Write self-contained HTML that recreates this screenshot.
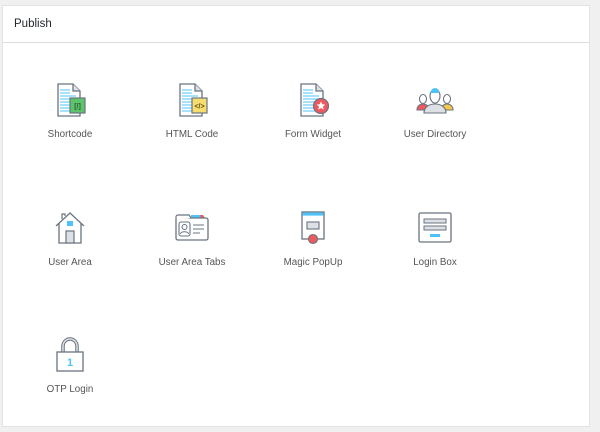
<!DOCTYPE html>
<html><head><style>
body{margin:0;width:600px;height:432px;background:#f0f0f0;font-family:"Liberation Sans",sans-serif;position:relative;overflow:hidden}
.card{position:absolute;left:2px;top:5px;width:588px;height:422px;background:#fff;border:1px solid #e2e2e2;box-sizing:border-box}
.hd{position:absolute;left:0;top:0;right:0;height:36px;border-bottom:1px solid #dcdcdc}
.hd span{position:absolute;left:11px;top:12px;font-size:11.5px;color:#23282d}
.it{position:absolute;width:120px;text-align:center}
.it svg{display:block;margin:0 auto}
.it div{font-size:9.8px;color:#555;margin-top:11px}
</style></head><body>
<div class="card"><div class="hd"><span>Publish</span></div></div>

<div class="it" style="left:10px;top:82px">
<svg width="36" height="36" viewBox="0 0 36 36"><path d="M6 2h15l7 7v25H6z" fill="#fff" stroke="#6b7480" stroke-width="1.3"/><path d="M21 2v7h7" fill="#dde1e6" stroke="#6b7480" stroke-width="1.3"/><g stroke="#4fc3f7" stroke-width="1"><line x1="8" y1="8" x2="18" y2="8"/><line x1="8" y1="11" x2="18" y2="11"/><line x1="8" y1="14" x2="24" y2="14"/><line x1="8" y1="17" x2="24" y2="17"/><line x1="8" y1="20" x2="24" y2="20"/><line x1="8" y1="23" x2="24" y2="23"/><line x1="8" y1="26" x2="24" y2="26"/><line x1="8" y1="29" x2="24" y2="29"/></g><rect x="18" y="16" width="15" height="15" fill="#5cc46a" stroke="#6b7480" stroke-width="1.2"/><text x="25.5" y="26.5" font-size="7" text-anchor="middle" fill="#2e5a33" font-weight="bold">[/]</text></svg>
<div>Shortcode</div></div>

<div class="it" style="left:132px;top:82px">
<svg width="36" height="36" viewBox="0 0 36 36"><path d="M6 2h15l7 7v25H6z" fill="#fff" stroke="#6b7480" stroke-width="1.3"/><path d="M21 2v7h7" fill="#dde1e6" stroke="#6b7480" stroke-width="1.3"/><g stroke="#4fc3f7" stroke-width="1"><line x1="8" y1="8" x2="18" y2="8"/><line x1="8" y1="11" x2="18" y2="11"/><line x1="8" y1="14" x2="24" y2="14"/><line x1="8" y1="17" x2="24" y2="17"/><line x1="8" y1="20" x2="24" y2="20"/><line x1="8" y1="23" x2="24" y2="23"/><line x1="8" y1="26" x2="24" y2="26"/><line x1="8" y1="29" x2="24" y2="29"/></g><rect x="18" y="16" width="15" height="15" fill="#f7dc6f" stroke="#6b7480" stroke-width="1.2"/><text x="25.5" y="26.5" font-size="7" text-anchor="middle" fill="#5a4a10" font-weight="bold">&lt;/&gt;</text></svg>
<div>HTML Code</div></div>

<div class="it" style="left:253px;top:82px">
<svg width="36" height="36" viewBox="0 0 36 36"><path d="M6 2h15l7 7v25H6z" fill="#fff" stroke="#6b7480" stroke-width="1.3"/><path d="M21 2v7h7" fill="#dde1e6" stroke="#6b7480" stroke-width="1.3"/><g stroke="#4fc3f7" stroke-width="1"><line x1="8" y1="8" x2="18" y2="8"/><line x1="8" y1="11" x2="18" y2="11"/><line x1="8" y1="14" x2="24" y2="14"/><line x1="8" y1="17" x2="24" y2="17"/><line x1="8" y1="20" x2="24" y2="20"/><line x1="8" y1="23" x2="24" y2="23"/><line x1="8" y1="26" x2="24" y2="26"/><line x1="8" y1="29" x2="24" y2="29"/></g><circle cx="26" cy="24" r="7.5" fill="#ec5a5f" stroke="#6b7480" stroke-width="1.2"/><path d="M26 19.5l1.3 2.8 3 .3-2.3 2 .7 3-2.7-1.6-2.7 1.6.7-3-2.3-2 3-.3z" fill="#fff"/></svg>
<div>Form Widget</div></div>

<div class="it" style="left:375px;top:82px">
<svg width="40" height="36" viewBox="0 0 40 36"><g stroke="#6b7480" stroke-width="1.1"><path d="M2 28c0-4 3-6 6-6s6 2 6 6z" fill="#ec5a5f"/><ellipse cx="8" cy="17" rx="3.5" ry="4.5" fill="#fff"/><path d="M26 28c0-4 3-6 6-6s6 2 6 6z" fill="#f7c948"/><ellipse cx="32" cy="17" rx="3.5" ry="4.5" fill="#fff"/><path d="M9 31c0-6 5-9 11-9s11 3 11 9z" fill="#dde1e6"/><ellipse cx="20" cy="14" rx="5" ry="7" fill="#fff"/></g><path d="M15.5 11a4.5 5 0 0 1 9 0z" fill="#4fc3f7"/></svg>
<div>User Directory</div></div>

<div class="it" style="left:10px;top:210px">
<svg width="36" height="36" viewBox="0 0 36 36"><path d="M4 16L18 3l14 13M7 13v20h22V13" fill="#fff" stroke="#6b7480" stroke-width="1.3"/><path d="M10 9V4h3v2" fill="none" stroke="#6b7480" stroke-width="1.2"/><rect x="15" y="11" width="6" height="5" fill="#4fc3f7"/><rect x="14" y="21" width="8" height="12" fill="#dde1e6" stroke="#6b7480" stroke-width="1.2"/></svg>
<div>User Area</div></div>

<div class="it" style="left:132px;top:210px">
<svg width="36" height="36" viewBox="0 0 36 36"><path d="M20 5h9l2 3h-11z" fill="#ec5a5f"/><path d="M17 5h9l1 3H17z" fill="#4fc3f7"/><rect x="2" y="8" width="32" height="22" rx="2" fill="#fff" stroke="#6b7480" stroke-width="1.3"/><path d="M2 10V7a2 2 0 0 1 2-2h11l2 3" fill="#fff" stroke="#6b7480" stroke-width="1.2"/><rect x="5" y="12" width="11" height="14" rx="2" fill="#fff" stroke="#6b7480" stroke-width="1.1"/><circle cx="10.5" cy="17" r="2.5" fill="none" stroke="#6b7480"/><path d="M6.5 24c0-3 8-3 8 0" fill="none" stroke="#6b7480"/><g stroke="#6b7480"><line x1="19" y1="15" x2="30" y2="15"/><line x1="19" y1="19" x2="30" y2="19"/><line x1="19" y1="23" x2="26" y2="23"/></g></svg>
<div>User Area Tabs</div></div>

<div class="it" style="left:253px;top:210px">
<svg width="36" height="36" viewBox="0 0 36 36"><rect x="7" y="2" width="22" height="27" fill="#fff" stroke="#6b7480" stroke-width="1.3"/><rect x="7.6" y="2.6" width="20.8" height="3" fill="#4fc3f7"/><rect x="12" y="12" width="12" height="7" fill="#dde1e6" stroke="#6b7480" stroke-width="1.1"/><circle cx="18" cy="29" r="4.5" fill="#ec5a5f" stroke="#6b7480" stroke-width="1.1"/></svg>
<div>Magic PopUp</div></div>

<div class="it" style="left:375px;top:210px">
<svg width="36" height="36" viewBox="0 0 36 36"><rect x="2" y="3" width="32" height="29" rx="1.5" fill="#fff" stroke="#6b7480" stroke-width="1.3"/><rect x="7" y="9" width="22" height="4" fill="#dde1e6" stroke="#6b7480" stroke-width="1"/><rect x="7" y="16" width="22" height="4" fill="#dde1e6" stroke="#6b7480" stroke-width="1"/><rect x="13" y="24" width="10" height="3" fill="#4fc3f7"/></svg>
<div>Login Box</div></div>

<div class="it" style="left:10px;top:337px">
<svg width="36" height="36" viewBox="0 0 36 36"><path d="M11 15V9a7 7 0 0 1 14 0v6" fill="none" stroke="#6b7480" stroke-width="3.5"/><path d="M11 15V9a7 7 0 0 1 14 0v6" fill="none" stroke="#dde1e6" stroke-width="1.5"/><rect x="5" y="15" width="26" height="19" fill="#fff" stroke="#6b7480" stroke-width="1.3"/><text x="18" y="29" font-size="11" font-weight="bold" text-anchor="middle" fill="#4fc3f7">1</text></svg>
<div>OTP Login</div></div>
</body></html>
